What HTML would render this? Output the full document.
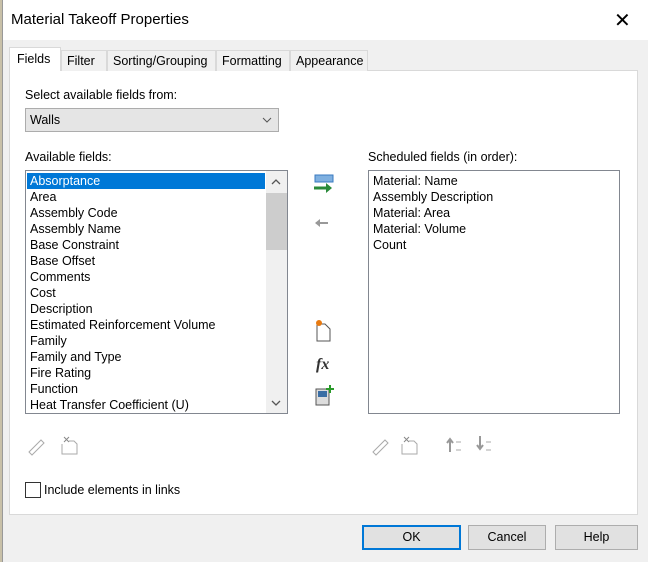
<!DOCTYPE html>
<html><head><style>
*{box-sizing:border-box;margin:0;padding:0}
body{width:648px;height:562px;background:#f0f0f0;font-family:"Liberation Sans",sans-serif;font-size:12px;color:#000;position:relative;overflow:hidden}
.abs{position:absolute}
.title{left:0;top:0;width:648px;height:40px;background:#fff}
.tab{top:50px;height:21px;border:1px solid #d9d9d9;border-bottom:none;background:#f0f0f0;padding:3px 0 0 5px;font-size:12.5px}
.list{background:#fff;border:1px solid #828790}
.item{height:16px;line-height:16px;padding-left:3px;font-size:12.5px}
.btn{top:525px;height:25px;background:#e1e1e1;border:1px solid #adadad;text-align:center;line-height:23px;font-size:12.5px}
</style></head><body>
<div class="abs title"></div>
<div class="abs" style="left:0;top:0;width:2px;height:562px;background:#c8c0a8"></div>
<div class="abs" style="left:2px;top:0;width:1px;height:562px;background:#999"></div>
<div class="abs" style="left:11px;top:11px;font-size:15px">Material Takeoff Properties</div>
<div class="abs" style="left:614px;top:8px;font-size:20px;font-weight:300">✕</div>
<div class="abs" style="left:9px;top:70px;width:629px;height:445px;background:#fff;border:1px solid #d9d9d9"></div>
<div class="abs tab" style="left:9px;top:47px;height:24px;width:52px;background:#fff;border-color:#d9d9d9;padding:4px 0 0 7px">Fields</div>
<div class="abs tab" style="left:61px;width:46px">Filter</div>
<div class="abs tab" style="left:107px;width:109px">Sorting/Grouping</div>
<div class="abs tab" style="left:216px;width:74px">Formatting</div>
<div class="abs tab" style="left:290px;width:78px">Appearance</div>
<div class="abs" style="left:25px;top:88px;font-size:12.5px">Select available fields from:</div>
<div class="abs" style="left:25px;top:108px;width:254px;height:24px;background:#e5e5e5;border:1px solid #acacac;padding:4px 0 0 4px;font-size:12.5px">Walls
<svg class="abs" style="right:6px;top:8px" width="10" height="6"><path d="M1 1l4 4 4-4" stroke="#555" fill="none"/></svg></div>
<div class="abs" style="left:25px;top:150px;font-size:12.5px">Available fields:</div>
<div class="abs" style="left:368px;top:150px;font-size:12.5px">Scheduled fields (in order):</div>
<div class="abs list" style="left:25px;top:170px;width:263px;height:244px;padding:2px 22px 0 1px">
<div class="item" style="background:#0078d7;color:#fff">Absorptance</div>
<div class="item">Area</div><div class="item">Assembly Code</div><div class="item">Assembly Name</div><div class="item">Base Constraint</div><div class="item">Base Offset</div><div class="item">Comments</div><div class="item">Cost</div><div class="item">Description</div><div class="item">Estimated Reinforcement Volume</div><div class="item">Family</div><div class="item">Family and Type</div><div class="item">Fire Rating</div><div class="item">Function</div><div class="item">Heat Transfer Coefficient (U)</div>
<div class="abs" style="right:0;top:0;width:21px;height:242px;background:#f0f0f0"></div>
<div class="abs" style="right:0;top:22px;width:21px;height:57px;background:#cdcdcd"></div>
<svg class="abs" style="right:6px;top:8px" width="10" height="6"><path d="M1 5l4-4 4 4" stroke="#555" fill="none" stroke-width="1.3"/></svg>
<svg class="abs" style="right:6px;top:229px" width="10" height="6"><path d="M1 1l4 4 4-4" stroke="#555" fill="none" stroke-width="1.3"/></svg>
</div>
<div class="abs list" style="left:368px;top:170px;width:252px;height:244px;padding:2px 0 0 1px">
<div class="item">Material: Name</div><div class="item">Assembly Description</div><div class="item">Material: Area</div><div class="item">Material: Volume</div><div class="item">Count</div>
</div>
<svg class="abs" style="left:312px;top:172px" width="24" height="260">
<rect x="3" y="3" width="18" height="7" fill="#7fb0e0" stroke="#3a7ac0"/>
<path d="M2 16h14" stroke="#2a8a3a" stroke-width="3"/><path d="M14 11l6 5-6 5z" fill="#2a8a3a"/>
<path d="M4 51h12" stroke="#999" stroke-width="2"/><path d="M8 47l-5 4 5 4z" fill="#999"/>
<path d="M5 152h8l5 5v12H5z" fill="#fff" stroke="#555"/><circle cx="7" cy="151" r="3" fill="#e87a10"/>
<text x="4" y="197" font-family="Liberation Serif" font-style="italic" font-weight="bold" font-size="16" fill="#333">fx</text>
<rect x="4" y="217" width="13" height="16" fill="#ddd" stroke="#555"/><rect x="6" y="219" width="9" height="6" fill="#3a6ea5"/>
<path d="M18 213v8M14 217h8" stroke="#2a9a2a" stroke-width="2"/>
</svg>
<svg class="abs" style="left:26px;top:432px" width="60" height="24" stroke="#aaa" fill="none">
<path d="M3 20l12-12 3 3-12 12z"/><path d="M38 5l5 5M43 5l-5 5" stroke="#888"/><path d="M43 9h5l3 3v10H36V12"/>
</svg>
<svg class="abs" style="left:370px;top:432px" width="130" height="24" stroke="#aaa" fill="none">
<path d="M3 20l12-12 3 3-12 12z"/><path d="M34 5l5 5M39 5l-5 5" stroke="#888"/><path d="M39 9h5l3 3v10H32V12"/>
<path d="M80 20V8M77 11l3-4 3 4" stroke="#999" stroke-width="2"/><path d="M86 10h5M86 18h5"/>
<path d="M110 4v12M107 13l3 4 3-4" stroke="#999" stroke-width="2"/><path d="M116 10h5M116 18h5"/>
</svg>
<div class="abs" style="left:25px;top:482px;width:16px;height:16px;border:1px solid #333;background:#fff"></div>
<div class="abs" style="left:44px;top:483px;font-size:12.5px">Include elements in links</div>
<div class="abs btn" style="left:362px;width:99px;border:2px solid #0078d7;line-height:21px">OK</div>
<div class="abs btn" style="left:468px;width:78px">Cancel</div>
<div class="abs btn" style="left:555px;width:83px">Help</div>
</body></html>
